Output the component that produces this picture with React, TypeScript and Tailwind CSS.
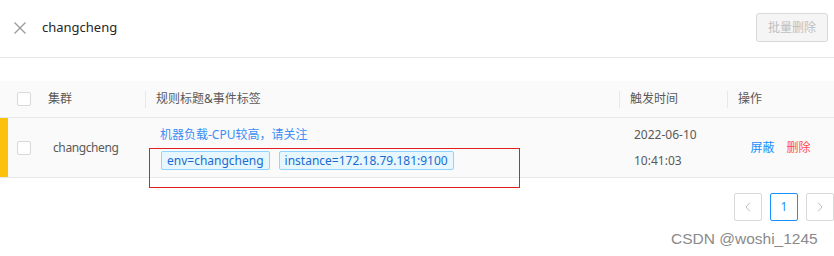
import React from 'react'

const font = { fontFamily: '"Noto Sans", "Noto Sans CJK SC", sans-serif' }

function Checkbox() {
  return <span className="block h-[14px] w-[14px] rounded-[2px] border border-[#d9d9d9] bg-white" />
}

function HeadCell({ label }: { label: string }) {
  return (
    <div className="flex items-center">
      <span className="h-[17px] w-px bg-[#e8e8e8]" />
      <span className="ml-[10px] text-[12px] text-[#595959]">{label}</span>
    </div>
  )
}

function Tag({ children }: { children: React.ReactNode }) {
  return (
    <span className="flex h-[19px] items-center rounded-[2px] border border-[#91d5ff] bg-[#e6f7ff] px-[5px] text-[12px] leading-none text-[#1a6bd0]">
      {children}
    </span>
  )
}

function Chevron({ dir }: { dir: 'left' | 'right' }) {
  return (
    <svg width="6" height="10" viewBox="0 0 6 10" fill="none" stroke="#bfbfbf" strokeWidth="1">
      {dir === 'left' ? <polyline points="5,0.5 1,5 5,9.5" /> : <polyline points="1,0.5 5,5 1,9.5" />}
    </svg>
  )
}

export default function App() {
  return (
    <div className="relative h-[256px] w-[834px] overflow-hidden bg-white" style={font}>
      {/* top bar */}
      <div className="flex h-[58px] items-center border-b border-[#e8e8e8] pb-[2px]">
        <svg className="ml-[14px]" width="12" height="12" viewBox="0 0 12 12" stroke="#9a9a9a" strokeWidth="1.2">
          <line x1="0.5" y1="0.5" x2="11.5" y2="11.5" />
          <line x1="11.5" y1="0.5" x2="0.5" y2="11.5" />
        </svg>
        <span className="ml-[16px] text-[13px] text-[#262626]">changcheng</span>
        <button className="ml-auto mr-[6px] h-[29px] w-[72px] rounded-[3px] border border-[#d9d9d9] bg-[#f5f5f5] text-[12px] text-[#bfbfbf]">
          批量删除
        </button>
      </div>

      {/* table header */}
      <div className="mt-[23px] grid h-[37px] grid-cols-[38px_107px_474px_108px_1fr] border-b border-[#e8e8e8] bg-[#fafafa]">
        <div className="flex items-center pl-[17px]">
          <Checkbox />
        </div>
        <div className="flex items-center pl-[10px] text-[12px] text-[#595959]">集群</div>
        <HeadCell label="规则标题&事件标签" />
        <HeadCell label="触发时间" />
        <HeadCell label="操作" />
      </div>

      {/* row */}
      <div className="flex h-[60px] border-b border-[#e8e8e8] bg-[#fafafa]">
        <div className="w-[8px] bg-[#fcc10d]" />
        <div className="grid flex-1 grid-cols-[30px_107px_474px_108px_1fr]">
          <div className="flex items-center pl-[9px]">
            <Checkbox />
          </div>
          <div className="flex items-center pl-[15px] text-[12px] tracking-[-0.4px] text-[#595959]">changcheng</div>
          <div className="flex flex-col pl-[15px] pt-[8px]">
            <span className="text-[12px] leading-[18px] text-[#3a8ef6]">机器负载-CPU较高，请关注</span>
            <div className="ml-px mt-[7px] flex gap-[9px]">
              <Tag>env=changcheng</Tag>
              <Tag>instance=172.18.79.181:9100</Tag>
            </div>
          </div>
          <div className="flex flex-col pl-[15px] pt-[4px] text-[12px] leading-[26px] text-[#595959]">
            <span>2022-06-10</span>
            <span>10:41:03</span>
          </div>
          <div className="flex items-center justify-center gap-[12px] text-[12px]">
            <span className="text-[#1890ff]">屏蔽</span>
            <span className="text-[#ff4d4f]">删除</span>
          </div>
        </div>
      </div>

      {/* pagination */}
      <div className="mt-[15px] flex justify-end gap-[8px] pr-0">
        <span className="flex h-[28px] w-[28px] items-center justify-center rounded-[2px] border border-[#d9d9d9]">
          <Chevron dir="left" />
        </span>
        <span className="flex h-[28px] w-[28px] items-center justify-center rounded-[2px] border border-[#1890ff] text-[12px] text-[#1890ff]">
          1
        </span>
        <span className="flex h-[28px] w-[28px] items-center justify-center rounded-[2px] border border-[#d9d9d9]">
          <Chevron dir="right" />
        </span>
      </div>

      {/* annotation box */}
      <div className="absolute left-[149px] top-[148px] h-[40px] w-[371px] border border-[#e0201f]" />

      {/* watermark */}
      <span
        className="absolute left-[671px] top-[229px] text-[15.5px] leading-[20px] text-[#8a8a8a]"
        style={{ fontFamily: '"Liberation Sans", Arial, sans-serif' }}
      >
        CSDN @woshi_1245
      </span>
    </div>
  )
}
